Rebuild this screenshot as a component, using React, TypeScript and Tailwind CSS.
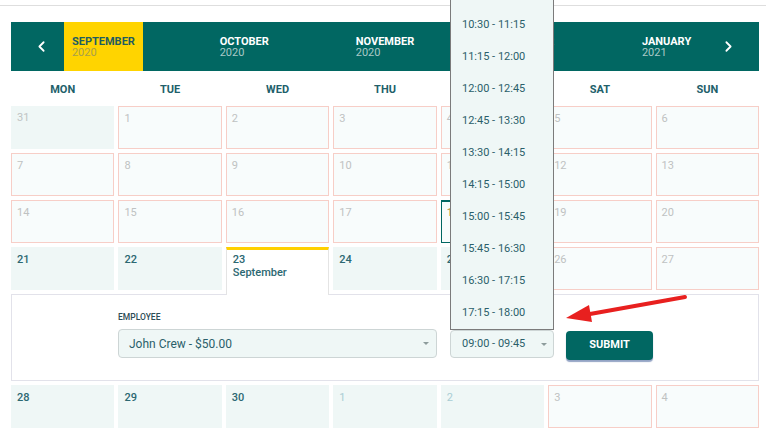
import React from 'react';
import { ChevronLeft, ChevronRight } from 'lucide-react';

type Cell = {
  day: number;
  kind: 'past' | 'prev' | 'open' | 'next' | 'today' | 'selected';
};

const months = [
  { name: 'SEPTEMBER', year: '2020', active: true },
  { name: 'OCTOBER', year: '2020' },
  { name: 'NOVEMBER', year: '2020' },
  { name: 'DECEMBER', year: '2020' },
  { name: 'JANUARY', year: '2021' },
];

const weekdays = ['MON', 'TUE', 'WED', 'THU', 'FRI', 'SAT', 'SUN'];

const slots = [
  '09:00 - 09:45',
  '09:45 - 10:30',
  '10:30 - 11:15',
  '11:15 - 12:00',
  '12:00 - 12:45',
  '12:45 - 13:30',
  '13:30 - 14:15',
  '14:15 - 15:00',
  '15:00 - 15:45',
  '15:45 - 16:30',
  '16:30 - 17:15',
  '17:15 - 18:00',
];

const p = (day: number): Cell => ({ day, kind: 'past' });
const o = (day: number): Cell => ({ day, kind: 'open' });

const weeksBefore: Cell[] = [
  { day: 31, kind: 'prev' }, p(1), p(2), p(3), p(4), p(5), p(6),
  p(7), p(8), p(9), p(10), p(11), p(12), p(13),
  p(14), p(15), p(16), p(17), { day: 18, kind: 'today' }, p(19), p(20),
  o(21), o(22), { day: 23, kind: 'selected' }, o(24), o(25), p(26), p(27),
];

const weeksAfter: Cell[] = [
  o(28), o(29), o(30), { day: 1, kind: 'next' }, { day: 2, kind: 'next' }, p(3), p(4),
];

function DayCell({ cell }: { cell: Cell }) {
  if (cell.kind === 'selected') {
    return (
      <div className="relative z-10 h-[48px] -mb-[5px] bg-white border-x border-[#e4e4e4] border-t-[3px] border-t-[#ffd000] px-[6px] pt-[3px] text-[11px] leading-[13px] font-medium text-[#2c6872]">
        <div>{cell.day}</div>
        <div>September</div>
      </div>
    );
  }
  if (cell.kind === 'open') {
    return (
      <div className="h-[43px] bg-[#eff7f6] px-[6px] pt-[6px] text-[11px] leading-[13px] font-medium text-[#2c6872]">
        {cell.day}
      </div>
    );
  }
  if (cell.kind === 'prev') {
    return (
      <div className="h-[43px] bg-[#eff7f6] px-[6px] pt-[5px] text-[11px] leading-[13px] text-[#bfc4c4]">
        {cell.day}
      </div>
    );
  }
  if (cell.kind === 'next') {
    return (
      <div className="h-[43px] bg-[#eff7f6] px-[6px] pt-[6px] text-[11px] leading-[13px] text-[#a9cdd4]">
        {cell.day}
      </div>
    );
  }
  if (cell.kind === 'today') {
    return (
      <div className="h-[43px] bg-[#f8fcfc] border border-[#016762] border-t-2 px-[5px] pt-[4px] text-[11px] leading-[13px] font-medium text-[#b8964c]">
        {cell.day}
      </div>
    );
  }
  return (
    <div className="h-[43px] bg-[#f8fcfc] border border-[#f7cec7] px-[5px] pt-[5px] text-[11px] leading-[13px] text-[#bfc2c2]">
      {cell.day}
    </div>
  );
}

function Caret() {
  return <span className="block w-0 h-0 border-x-[3px] border-x-transparent border-t-[3px] border-t-[#8d9c9c]" />;
}

function BookingPanel() {
  return (
    <div className="col-span-7 h-[87px] border border-[#e2e2ea] bg-white flex items-start pl-[106px] pt-[17px]">
      <div className="w-[319px]">
        <div className="text-[8.5px] leading-[11px] font-medium uppercase text-[#2d4c56] mb-[6px]">Employee</div>
        <div className="h-[29px] rounded-[4px] border border-[#cdd5d5] bg-[#eff7f6] pl-[10px] pr-[7px] flex items-center justify-between text-[12px] text-[#2b5f6a]">
          <span>John Crew - $50.00</span>
          <Caret />
        </div>
      </div>
      <div className="relative ml-[13px] mt-[18px] w-[104px]">
        <div className="absolute bottom-full left-0 z-20 w-[104px] border border-[#7b7b7b] bg-[#eff7f6]">
          {slots.map((s) => (
            <div key={s} className="h-[32px] pl-[11px] flex items-center text-[11px] text-[#2b5f6a]">
              {s}
            </div>
          ))}
        </div>
        <div className="h-[28px] rounded-[4px] border border-[#cdd5d5] bg-[#eff7f6] pl-[11px] pr-[6px] flex items-center justify-between text-[11px] text-[#2b5f6a]">
          <span>09:00 - 09:45</span>
          <Caret />
        </div>
      </div>
      <button className="ml-[12px] mt-[19px] w-[87px] h-[29px] rounded-[4px] bg-[#016762] text-white text-[11px] font-bold shadow-[0_2px_1px_rgba(60,90,150,0.55)]">
        SUBMIT
      </button>
    </div>
  );
}

export default function App() {
  return (
    <div className="relative w-[766px] h-[439px] overflow-hidden bg-white font-['Roboto','Liberation_Sans',sans-serif]">
      <div className="h-[6px] border-b border-[#dedede]" />
      <div className="pl-[11px] pr-[7px] pt-[16px]">
        <div className="relative h-[49px] bg-[#016762] flex px-[22px]">
          <ChevronLeft className="absolute left-[22px] top-[16px] text-white" size={17} strokeWidth={2.5} />
          {months.map((m) => (
            <div key={m.name} className="w-[142px] flex justify-center">
              <div className={`h-full flex flex-col justify-center px-2 pt-[1px] ${m.active ? 'bg-[#ffd400]' : ''}`}>
                <div className={`text-[11px] leading-[11px] font-bold ${m.active ? 'text-[#1f5d60]' : 'text-white'}`}>{m.name}</div>
                <div className={`text-[11px] leading-[12px] ${m.active ? 'text-[#a7a04c]' : 'text-[#a9c9c7]'}`}>{m.year}</div>
              </div>
            </div>
          ))}
          <ChevronRight className="absolute right-[22px] top-[16px] text-white" size={17} strokeWidth={2.5} />
        </div>
        <div className="grid grid-cols-7 gap-x-1 h-[35px] pt-[3px]">
          {weekdays.map((d) => (
            <div key={d} className="flex items-center justify-center text-[11px] font-bold text-[#21606a]">
              {d}
            </div>
          ))}
        </div>
        <div className="grid grid-cols-7 gap-1">
          {weeksBefore.map((c, i) => (
            <DayCell key={'a' + i} cell={c} />
          ))}
          <BookingPanel />
          {weeksAfter.map((c, i) => (
            <DayCell key={'b' + i} cell={c} />
          ))}
        </div>
      </div>
      <svg className="absolute inset-0 pointer-events-none z-30" width="766" height="439" viewBox="0 0 766 439">
        <line x1="685" y1="297" x2="590" y2="314" stroke="#e8201f" strokeWidth="4" strokeLinecap="round" />
        <polygon points="566,318 589,305 592,322" fill="#e8201f" />
      </svg>
    </div>
  );
}
